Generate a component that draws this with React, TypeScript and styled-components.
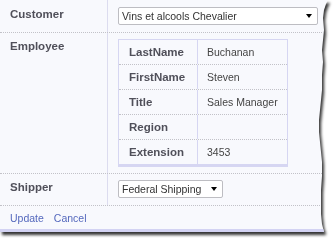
import React from "react";
import styled, { createGlobalStyle } from "styled-components";

const GlobalStyle = createGlobalStyle`
  html, body { margin: 0; padding: 0; background: #ffffff; }
  body { font-family: "Liberation Sans", Arial, sans-serif; }
`;

const Frame = styled.div`
  width: 335px;
  height: 240px;
  overflow: hidden;
  background: #ffffff;
`;

const ShadowWrap = styled.div`
  width: 328px;
  filter: drop-shadow(2.5px 3px 1.8px rgba(0, 0, 0, 0.8));
`;

const Panel = styled.div`
  background: #f8f9fd;
  border-bottom: 3px solid #d3d3f3;
  clip-path: polygon(
    0 0, 328px 0, 326px 4px, 324px 10px, 323px 18px, 324px 30px, 323px 40px,
    322px 50px, 323px 62px, 322px 75px, 322px 90px, 321px 100px, 320px 110px,
    319px 120px, 319px 132px, 320px 142px, 321px 152px, 322px 162px, 322px 176px,
    321px 190px, 321px 204px, 321px 214px, 322px 224px, 324px 100%, 0 100%
  );
`;

const Row = styled.div`
  display: flex;
  border-bottom: 1px dotted #c2c2c8;
`;

const LabelCell = styled.div<{ $top: number }>`
  width: 97px;
  flex: none;
  padding: ${(p) => p.$top}px 0 0 10px;
  border-right: 1px solid #dcdcef;
  font-weight: bold;
  font-size: 11.5px;
  line-height: 14px;
  color: #50505a;
`;

const ValueCell = styled.div<{ $top: number; $bottom: number }>`
  flex: 1;
  padding: ${(p) => p.$top}px 10px ${(p) => p.$bottom}px 10px;
`;

const Select = styled.div<{ $width: number }>`
  width: ${(p) => p.$width}px;
  height: 18px;
  box-sizing: border-box;
  border: 1px solid #bdbdc2;
  border-radius: 2px;
  background: #ffffff;
  display: flex;
  align-items: center;
  justify-content: space-between;
  padding: 0 5px 0 3px;
  font-size: 10.5px;
  color: #333333;
`;

const Arrow = styled.span`
  width: 0;
  height: 0;
  border-left: 3.5px solid transparent;
  border-right: 3.5px solid transparent;
  border-top: 4px solid #000000;
`;

const DetailTable = styled.div`
  width: 170px;
  border: 1px solid #d6d6f2;
  border-bottom: 3px solid #d6d6f2;
  box-sizing: border-box;
`;

const DetailRow = styled.div<{ $last?: boolean }>`
  display: flex;
  height: ${(p) => (p.$last ? 24 : 25)}px;
  box-sizing: border-box;
  border-bottom: ${(p) => (p.$last ? "none" : "1px dotted #c2c2c8")};
`;

const DetailLabel = styled.div`
  width: 68px;
  flex: none;
  padding-left: 10px;
  border-right: 1px solid #d6d6f2;
  display: flex;
  align-items: center;
  font-weight: bold;
  font-size: 11.5px;
  color: #50505a;
`;

const DetailValue = styled.div`
  flex: 1;
  padding-left: 9px;
  display: flex;
  align-items: center;
  font-size: 10.5px;
  color: #444444;
`;

const Footer = styled.div`
  height: 23px;
  display: flex;
  align-items: center;
  gap: 10px;
  padding: 1px 10px 0 10px;
  box-sizing: border-box;
`;

const Link = styled.a`
  font-size: 10.5px;
  color: #5468bd;
  text-decoration: none;
`;

const employee: [string, string][] = [
  ["LastName", "Buchanan"],
  ["FirstName", "Steven"],
  ["Title", "Sales Manager"],
  ["Region", ""],
  ["Extension", "3453"],
];

export default function App() {
  return (
    <Frame>
      <GlobalStyle />
      <ShadowWrap>
        <Panel>
          <Row>
            <LabelCell $top={7}>Customer</LabelCell>
            <ValueCell $top={7} $bottom={7}>
              <Select $width={200}>
                <span>Vins et alcools Chevalier</span>
                <Arrow />
              </Select>
            </ValueCell>
          </Row>
          <Row>
            <LabelCell $top={6}>Employee</LabelCell>
            <ValueCell $top={6} $bottom={6}>
              <DetailTable>
                {employee.map(([k, v], i) => (
                  <DetailRow key={k} $last={i === employee.length - 1}>
                    <DetailLabel>{k}</DetailLabel>
                    <DetailValue>{v}</DetailValue>
                  </DetailRow>
                ))}
              </DetailTable>
            </ValueCell>
          </Row>
          <Row>
            <LabelCell $top={6}>Shipper</LabelCell>
            <ValueCell $top={6} $bottom={7}>
              <Select $width={105}>
                <span>Federal Shipping</span>
                <Arrow />
              </Select>
            </ValueCell>
          </Row>
          <Footer>
            <Link href="#">Update</Link>
            <Link href="#">Cancel</Link>
          </Footer>
        </Panel>
      </ShadowWrap>
    </Frame>
  );
}
